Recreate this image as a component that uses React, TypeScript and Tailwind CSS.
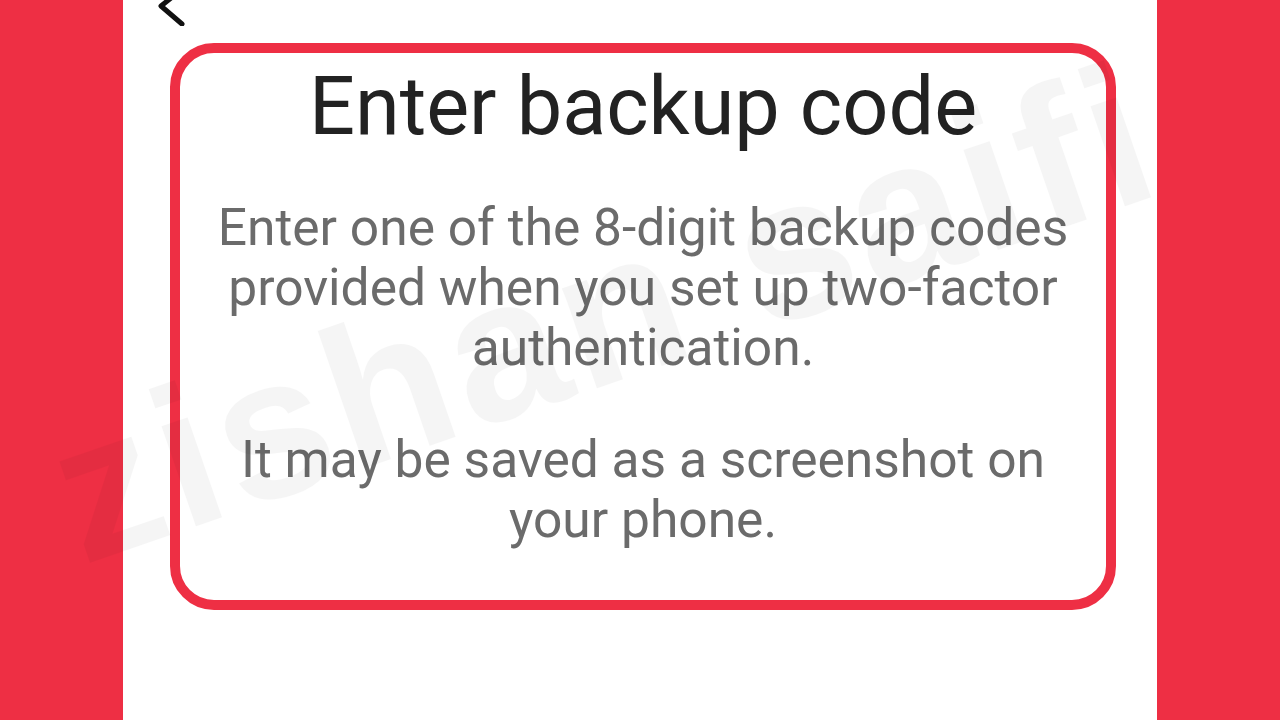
export default function App() {
  return (
    <div className="relative flex h-[720px] w-[1280px] justify-center overflow-hidden bg-[#ee2f44] font-['Roboto',sans-serif]">
      <div className="flex h-full w-[1034px] flex-col bg-white">
        <div className="h-[43px] pl-[32px]">
          <svg width="34" height="34" viewBox="0 0 34 34" className="-mt-[8px]" fill="none">
            <path d="M26 4 L6 20 L27 38" stroke="#111" strokeWidth="5" strokeLinecap="round" strokeLinejoin="round" transform="translate(0,-6)" />
          </svg>
        </div>
        <div className="ml-[47px] flex h-[567px] w-[946px] flex-col items-center rounded-[44px] border-[10px] border-[#ee2f44] pt-[12px]">
          <h1 className="text-[81px] leading-[84px] text-[#222]">Enter backup code</h1>
          <p className="mt-[49px] text-center text-[51.5px] leading-[60px] text-[#6b6b6b]">
            Enter one of the 8-digit backup codes
            <br />
            provided when you set up two-factor
            <br />
            authentication.
          </p>
          <p className="mt-[52px] text-center text-[51.5px] leading-[60px] text-[#6b6b6b]">
            It may be saved as a screenshot on
            <br />
            your phone.
          </p>
        </div>
      </div>
      <div
        aria-hidden
        className="pointer-events-none absolute left-[60px] top-[400px] origin-left -rotate-[19deg] whitespace-nowrap font-['Liberation_Sans',sans-serif] text-[200px] font-bold leading-none tracking-[6px] text-black opacity-[0.035]"
      >
        zishan saifi
      </div>
    </div>
  );
}
